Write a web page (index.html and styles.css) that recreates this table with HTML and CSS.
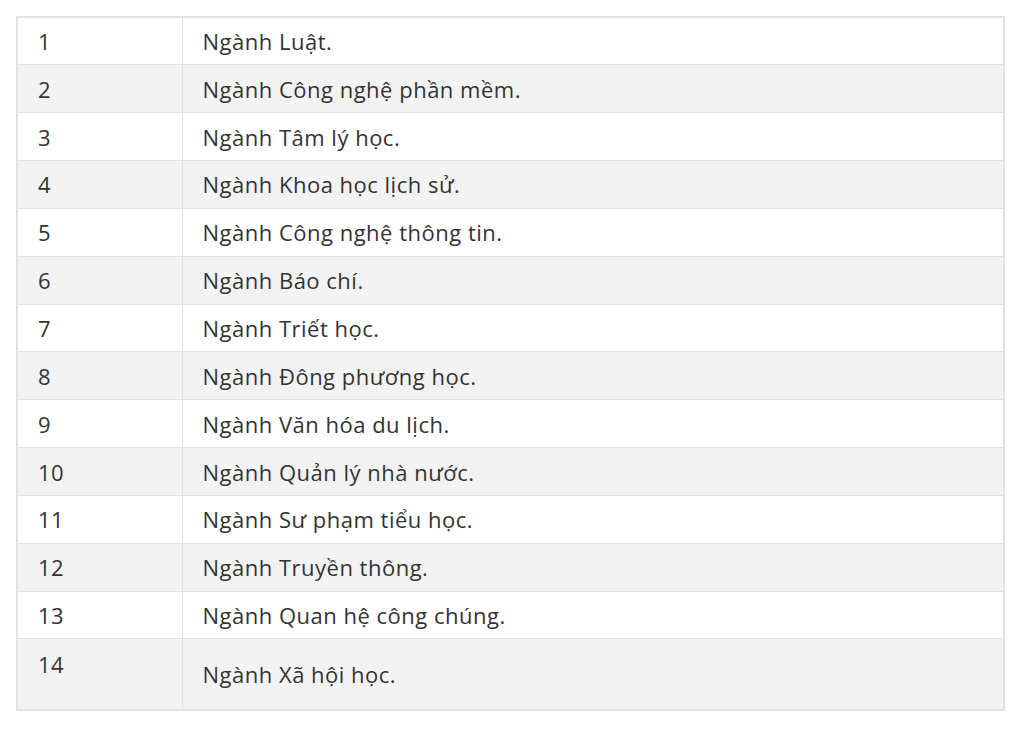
FILE: index.html
```html
<!DOCTYPE html>
<html lang="vi">
<head>
<meta charset="utf-8">
<link rel="stylesheet" href="styles.css">
</head>
<body>
<table class="majors">
<tbody>
<tr><td class="num">1</td><td class="name">Ngành Luật.</td></tr>
<tr><td class="num">2</td><td class="name">Ngành Công nghệ phần mềm.</td></tr>
<tr><td class="num">3</td><td class="name">Ngành Tâm lý học.</td></tr>
<tr><td class="num">4</td><td class="name">Ngành Khoa học lịch sử.</td></tr>
<tr><td class="num">5</td><td class="name">Ngành Công nghệ thông tin.</td></tr>
<tr><td class="num">6</td><td class="name">Ngành Báo chí.</td></tr>
<tr><td class="num">7</td><td class="name">Ngành Triết học.</td></tr>
<tr><td class="num">8</td><td class="name">Ngành Đông phương học.</td></tr>
<tr><td class="num">9</td><td class="name">Ngành Văn hóa du lịch.</td></tr>
<tr><td class="num">10</td><td class="name">Ngành Quản lý nhà nước.</td></tr>
<tr><td class="num">11</td><td class="name">Ngành Sư phạm tiểu học.</td></tr>
<tr><td class="num">12</td><td class="name">Ngành Truyền thông.</td></tr>
<tr><td class="num">13</td><td class="name">Ngành Quan hệ công chúng.</td></tr>
<tr class="tall"><td class="num top">14</td><td class="name">Ngành Xã hội học.</td></tr>
</tbody>
</table>
</body>
</html>
```
FILE: styles.css
```css
html, body {
  margin: 0;
  padding: 0;
  background: #ffffff;
}
body {
  padding: 16px 19px 0 16px;
  font-family: "Open Sans", "Noto Sans", sans-serif;
  font-size: 22px;
  letter-spacing: 0.5px;
  color: #333333;
}
.majors {
  width: 100%;
  border-collapse: collapse;
  border: 2px solid #e2e2e2;
}
.majors td {
  border: 1px solid #e2e2e2;
  height: 47.85px;
  box-sizing: border-box;
  padding: 0 20px;
  vertical-align: middle;
  line-height: 26px;
}
.majors tr:nth-child(even) td {
  background: #f3f3f3;
}
.majors td.num {
  width: 165px;
  padding-left: 20px;
}
.majors tr.tall td {
  height: 71px;
}
.majors td.top {
  vertical-align: top;
  padding-top: 12px;
}
```
